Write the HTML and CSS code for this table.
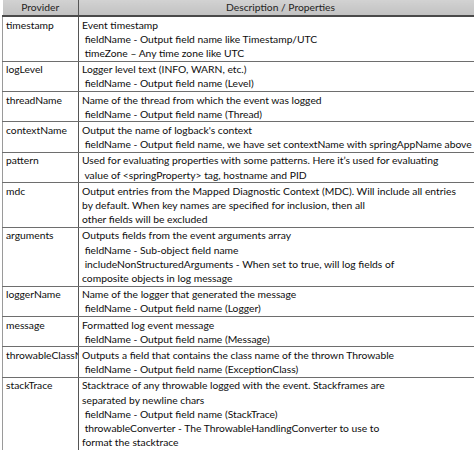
FILE: index.html
```html
<!DOCTYPE html>
<html>
<head>
<meta charset="utf-8">
<link rel="stylesheet" href="styles.css">
</head>
<body>
<div class="frame">
<table class="props">
  <colgroup><col class="c-prov"><col class="c-desc"></colgroup>
  <thead>
    <tr><th>Provider</th><th>Description / Properties</th></tr>
  </thead>
  <tbody>
    <tr><td>timestamp</td><td>Event timestamp<br>&nbsp;fieldName - Output field name like Timestamp/UTC<br>&nbsp;timeZone – Any time zone like UTC</td></tr>
    <tr><td>logLevel</td><td>Logger level text (INFO, WARN, etc.)<br>&nbsp;fieldName - Output field name (Level)</td></tr>
    <tr><td>threadName</td><td>Name of the thread from which the event was logged<br>&nbsp;fieldName - Output field name (Thread)</td></tr>
    <tr><td>contextName</td><td>Output the name of logback's context<br>&nbsp;fieldName - Output field name, we have set contextName with springAppName above</td></tr>
    <tr><td>pattern</td><td>Used for evaluating properties with some patterns. Here it’s used for evaluating<br>&nbsp;value of &lt;springProperty&gt; tag, hostname and PID</td></tr>
    <tr><td>mdc</td><td>Output entries from the Mapped Diagnostic Context (MDC). Will include all entries<br>by default. When key names are specified for inclusion, then all<br>other fields will be excluded</td></tr>
    <tr><td>arguments</td><td>Outputs fields from the event arguments array<br>&nbsp;fieldName - Sub-object field name<br>&nbsp;includeNonStructuredArguments - When set to true, will log fields of<br>composite objects in log message</td></tr>
    <tr><td>loggerName</td><td>Name of the logger that generated the message<br>&nbsp;fieldName - Output field name (Logger)</td></tr>
    <tr><td>message</td><td>Formatted log event message<br>&nbsp;fieldName - Output field name (Message)</td></tr>
    <tr><td>throwableClassName</td><td>Outputs a field that contains the class name of the thrown Throwable<br>&nbsp;fieldName - Output field name (ExceptionClass)</td></tr>
    <tr><td>stackTrace</td><td>Stacktrace of any throwable logged with the event. Stackframes are<br>separated by newline chars<br>&nbsp;fieldName - Output field name (StackTrace)<br>&nbsp;throwableConverter - The ThrowableHandlingConverter to use to<br>format the stacktrace<br>&nbsp;</td></tr>
  </tbody>
</table>
</div>
</body>
</html>
```

FILE: styles.css
```css
html, body {
  margin: 0;
  padding: 0;
  background: #ffffff;
}

.frame {
  width: 474px;
  height: 450px;
  overflow: hidden;
  padding-left: 2px;
  box-sizing: border-box;
}

.props {
  border-collapse: collapse;
  table-layout: fixed;
  width: 480px;
  font-family: Lato, "Liberation Sans", sans-serif;
  font-size: 10.3px;
  line-height: 14.2px;
  color: #0d0d0d;
}

.c-prov { width: 76px; }

.props th {
  height: 15px;
  padding: 0;
  font-weight: normal;
  color: #1f1f1f;
  background: linear-gradient(#d2d2d2, #c2c2c2);
  border-bottom: 2px solid #4a4a4a;
  text-align: center;
  vertical-align: middle;
  line-height: 15px;
}

.props th + th {
  border-left: 1px solid #555555;
}

.props td {
  padding: 0.5px 3px;
  vertical-align: top;
  white-space: nowrap;
  overflow: hidden;
  text-overflow: clip;
  border-bottom: 1px solid #6e6e6e;
}

.props td:first-child {
  border-left: 1px solid #9a9a9a;
}

.props td + td {
  border-left: 1px solid #555555;
}
```
